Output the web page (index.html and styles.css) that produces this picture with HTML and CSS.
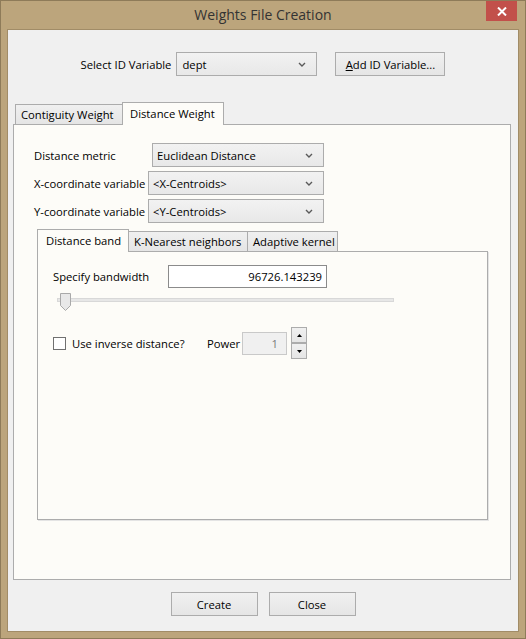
FILE: index.html
```html
<!DOCTYPE html>
<html lang="en">
<head>
  <meta charset="UTF-8">
  <title>Weights File Creation</title>
  <link rel="stylesheet" href="styles.css">
</head>
<body>
  <div class="window">
    <div class="titlebar">
      <span class="title">Weights File Creation</span>
      <div class="close-btn">
        <svg width="10" height="9" viewBox="0 0 10 9"><path d="M1 0.5l8 8M9 0.5l-8 8" stroke="#fff" stroke-width="2"/></svg>
      </div>
    </div>

    <div class="client">
      <div class="id-row">
        <span class="id-label">Select ID Variable</span>
        <div class="combo combo-id">
          <span>dept</span>
          <svg class="chev" width="8" height="5" viewBox="0 0 8 5"><path d="M1 1l3 3 3-3" fill="none" stroke="#5a5a5a" stroke-width="1.4"/></svg>
        </div>
        <div class="btn btn-add"><u>A</u>dd ID Variable...</div>
      </div>

      <!-- outer notebook -->
      <div class="notebook">
        <div class="tab-strip">
          <div class="tab tab-contig">Contiguity Weight</div>
          <div class="tab active tab-dist">Distance Weight</div>
        </div>
        <div class="panel outer-panel">
          <div class="field-grid">
            <span class="field-label">Distance metric</span>
            <div class="combo combo-metric">
              <span>Euclidean Distance</span>
              <svg class="chev" width="8" height="5" viewBox="0 0 8 5"><path d="M1 1l3 3 3-3" fill="none" stroke="#5a5a5a" stroke-width="1.4"/></svg>
            </div>
            <span class="field-label">X-coordinate variable</span>
            <div class="combo combo-coord">
              <span>&lt;X-Centroids&gt;</span>
              <svg class="chev" width="8" height="5" viewBox="0 0 8 5"><path d="M1 1l3 3 3-3" fill="none" stroke="#5a5a5a" stroke-width="1.4"/></svg>
            </div>
            <span class="field-label">Y-coordinate variable</span>
            <div class="combo combo-coord">
              <span>&lt;Y-Centroids&gt;</span>
              <svg class="chev" width="8" height="5" viewBox="0 0 8 5"><path d="M1 1l3 3 3-3" fill="none" stroke="#5a5a5a" stroke-width="1.4"/></svg>
            </div>
          </div>

          <!-- inner notebook -->
          <div class="notebook inner-notebook">
            <div class="tab-strip inner-strip">
              <div class="tab active tab-band">Distance band</div>
              <div class="tab tab-knn">K-Nearest neighbors</div>
              <div class="tab tab-kernel">Adaptive kernel</div>
            </div>
            <div class="panel inner-panel">
              <div class="band-row">
                <span class="band-label">Specify bandwidth</span>
                <div class="textbox band-input">96726.143239</div>
              </div>
              <div class="slider">
                <div class="slider-track"></div>
                <svg class="slider-thumb" width="11" height="18" viewBox="0 0 11 18"><path d="M0.5 0.5h10v12l-5 5l-5-5z" fill="#e8e8e8" stroke="#a9a9a9"/></svg>
              </div>
              <div class="power-row">
                <span class="checkbox"></span>
                <span class="check-label">Use inverse distance?</span>
                <span class="power-label">Power</span>
                <div class="textbox power-input">1</div>
                <div class="spin">
                  <div class="spin-btn"><svg width="5" height="3" viewBox="0 0 5 3"><path d="M2.5 0l2.5 3h-5z" fill="#000"/></svg></div>
                  <div class="spin-btn"><svg width="5" height="3" viewBox="0 0 5 3"><path d="M0 0h5l-2.5 3z" fill="#000"/></svg></div>
                </div>
              </div>
            </div>
          </div>
        </div>
      </div>

      <div class="footer">
        <div class="btn btn-footer">Create</div>
        <div class="btn btn-footer">Close</div>
      </div>
    </div>
  </div>
</body>
</html>
```

FILE: styles.css
```css
body {
  margin: 0;
  font-family: "Open Sans", "Noto Sans", sans-serif;
  font-size: 11.25px;
  color: #000;
  background: #bca57c;
}
.window {
  width: 526px;
  height: 639px;
  box-sizing: border-box;
  border: 1px solid #8e7b59;
  background: #bca57c;
  display: flex;
  flex-direction: column;
}
.titlebar {
  height: 28px;
  position: relative;
  display: flex;
  align-items: center;
  justify-content: center;
}
.title {
  font-size: 14px;
  color: #333;
  margin-top: -1px;
}
.close-btn {
  position: absolute;
  top: 0;
  right: 8px;
  width: 31px;
  height: 20px;
  background: #c2504a;
  display: flex;
  align-items: center;
  justify-content: center;
}
.client {
  flex: 1;
  margin: 0 6px 6px 6px;
  border: 1px solid #a18c67;
  background: #f0f0f0;
  display: flex;
  flex-direction: column;
  padding-top: 22px;
}

/* controls */
.combo {
  box-sizing: border-box;
  height: 24px;
  border: 1px solid #acacac;
  background: linear-gradient(#f2f2f2, #e8e8e8);
  display: flex;
  align-items: center;
  justify-content: space-between;
  padding: 0 10px 0 4px;
}
.btn {
  box-sizing: border-box;
  height: 24px;
  border: 1px solid #acacac;
  background: linear-gradient(#f0f0f0, #e5e5e5);
  display: flex;
  align-items: center;
  justify-content: center;
}
.textbox {
  box-sizing: border-box;
  border: 1px solid #8b8b8b;
  background: #fff;
  display: flex;
  align-items: center;
  justify-content: flex-end;
  padding: 0 4px;
}

.id-row {
  display: flex;
  align-items: center;
  justify-content: center;
  height: 24px;
}
.id-label {
  margin-right: 5px;
}
.combo-id {
  width: 141px;
  padding-left: 5px;
}
.btn-add {
  width: 110px;
  margin-left: 18px;
}

/* notebook */
.notebook {
  display: flex;
  flex-direction: column;
}
.client > .notebook {
  flex: 1;
  margin: 26px 7px 0 5px;
}
.tab-strip {
  display: flex;
  align-items: flex-end;
  height: 22px;
  padding-left: 2px;
}
.tab {
  box-sizing: border-box;
  height: 20px;
  border: 1px solid #acacac;
  border-bottom: none;
  background: linear-gradient(#f0f0f0, #e5e5e5);
  display: flex;
  align-items: center;
  padding-left: 5px;
  white-space: nowrap;
}
.tab.active {
  height: 23px;
  margin-bottom: -1px;
  background: #fdfcf8;
  position: relative;
  z-index: 1;
  padding-bottom: 2px;
}
.tab-contig { width: 108px; }
.tab-dist { width: 102px; margin-left: -1px; padding-left: 7px; }
.panel {
  border: 1px solid #acacac;
  background: #fdfcf8;
}
.outer-panel {
  flex: 1;
  padding: 18px 20px 0 20px;
}
.field-grid {
  display: grid;
  grid-template-columns: 114px 176px;
  row-gap: 4px;
  align-items: center;
}
.combo-metric {
  margin-left: 4px;
}

/* inner notebook */
.inner-notebook {
  margin: 6px 2px 0 3px;
}
.inner-strip {
  padding-left: 0;
}
.tab-band { width: 92px; padding-left: 8px; }
.tab-knn { width: 120px; margin-left: -1px; }
.tab-kernel { width: 91px; margin-left: -1px; }
.inner-panel {
  height: 254px;
  padding: 13px 15px 0 15px;
  box-shadow: 1px 1px 0 #e4e4e4;
}
.band-row {
  display: flex;
  align-items: center;
}
.band-label {
  width: 115px;
}
.band-input {
  width: 159px;
  height: 23px;
}
.slider {
  position: relative;
  height: 19px;
  margin: 4px 0 0 4px;
  width: 337px;
}
.slider-track {
  position: absolute;
  left: 0;
  right: 0;
  top: 6px;
  height: 2px;
  border: 1px solid #d8d8d8;
  background: #e7e7e7;
}
.slider-thumb {
  position: absolute;
  left: 3px;
  top: 1px;
}
.power-row {
  display: flex;
  align-items: center;
  height: 32px;
  margin-top: 16px;
}
.checkbox {
  box-sizing: border-box;
  width: 13px;
  height: 13px;
  border: 1px solid #707070;
  background: #fff;
}
.check-label {
  margin-left: 6px;
  width: 135px;
}
.power-label {
  width: 35px;
}
.power-input {
  width: 45px;
  height: 23px;
  background: #f0f0f0;
  border-color: #c9c9c9;
  color: #7a7a7a;
  padding-right: 8px;
}
.spin {
  margin-left: 4px;
  display: flex;
  flex-direction: column;
}
.spin-btn {
  box-sizing: border-box;
  width: 16px;
  height: 16px;
  border: 1px solid #acacac;
  background: linear-gradient(#f0f0f0, #e5e5e5);
  display: flex;
  align-items: center;
  justify-content: center;
}

.footer {
  display: flex;
  justify-content: center;
  gap: 11px;
  padding: 12px 0 15px 0;
}
.btn-footer {
  width: 87px;
}
```
